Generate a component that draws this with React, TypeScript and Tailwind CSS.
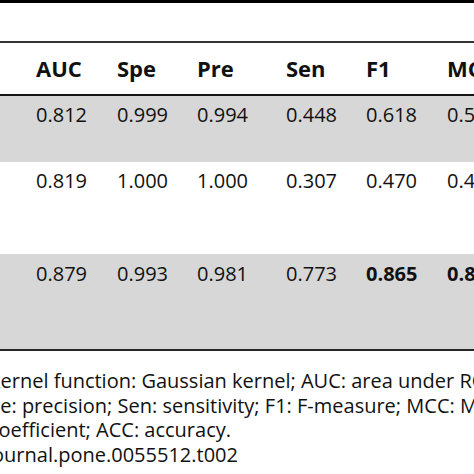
import React from 'react';

const cols = 'grid grid-cols-[36px_81px_80px_89px_80px_81px_120px] whitespace-nowrap';

const header = ['AUC', 'Spe', 'Pre', 'Sen', 'F1', 'MCC'];

const rows = [
  { bg: 'bg-[#d7d7d7]', h: 'h-[66px] pt-[5px]', vals: ['0.812', '0.999', '0.994', '0.448', '0.618', '0.596'], bold: [] as number[] },
  { bg: 'bg-white', h: 'h-[92px] pt-[5px]', vals: ['0.819', '1.000', '1.000', '0.307', '0.470', '0.498'], bold: [] as number[] },
  { bg: 'bg-[#d7d7d7]', h: 'h-[95px] pt-[6px]', vals: ['0.879', '0.993', '0.981', '0.773', '0.865', '0.846'], bold: [4, 5] },
];

const App: React.FC = () => {
  return (
    <div className="w-[474px] h-[474px] overflow-hidden bg-white text-[#111] font-['Open_Sans',sans-serif] text-[20px] leading-[28px]">
      <div className="h-[3px] bg-black" />
      <div className="h-[38px]" />
      <div className="h-[2px] bg-[#333]" />

      {/* header */}
      <div className={`${cols} h-[51px] pt-[11px] font-bold text-[22px]`}>
        <div />
        {header.map((h) => (
          <div key={h}>{h}</div>
        ))}
      </div>
      <div className="h-[2px] bg-[#151515]" />

      {rows.map((r, i) => (
        <div key={i} className={`${cols} ${r.bg} ${r.h}`}>
          <div />
          {r.vals.map((v, j) => (
            <div key={j} className={r.bold.includes(j) ? 'font-bold' : ''}>
              {v}
            </div>
          ))}
        </div>
      ))}
      <div className="h-[2px] bg-[#262626]" />

      {/* footnote */}
      <div className="pt-[18px] leading-[24.5px] whitespace-nowrap">
        <p className="ml-[-10px]">kernel function: Gaussian kernel; AUC: area under ROC curve;</p>
        <p className="ml-[-20px]">Pre: precision; Sen: sensitivity; F1: F-measure; MCC: Matthews</p>
        <p className="ml-[-11px]">coefficient; ACC: accuracy.</p>
        <p className="ml-[-13px]">journal.pone.0055512.t002</p>
      </div>
    </div>
  );
};

export default App;
